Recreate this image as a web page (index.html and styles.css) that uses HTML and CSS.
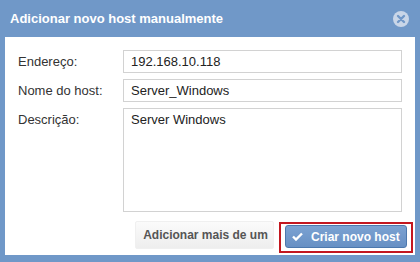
FILE: index.html
```html
<!DOCTYPE html>
<html>
<head>
<meta charset="utf-8">
<link rel="stylesheet" href="styles.css">
</head>
<body>
<div class="dialog">
  <div class="titlebar">
    <span class="title">Adicionar novo host manualmente</span>
    <svg class="close" width="16" height="16" viewBox="0 0 16 16">
      <circle cx="8" cy="8" r="8" fill="#c9d6e8"/>
      <path d="M5 5 L11 11 M11 5 L5 11" stroke="#7198c8" stroke-width="2.4" stroke-linecap="round"/>
    </svg>
  </div>
  <div class="content">
    <div class="form">
      <label class="label">Endereço:</label>
      <div class="field">192.168.10.118</div>
      <label class="label">Nome do host:</label>
      <div class="field">Server_Windows</div>
      <label class="label">Descrição:</label>
      <div class="field area">Server Windows</div>
    </div>
    <div class="actions">
      <button class="btn-secondary">Adicionar mais de um</button>
      <span class="highlight">
        <button class="btn-primary">
          <svg width="11" height="9" viewBox="0 0 11 9"><path d="M1 4.5 L4 7.5 L10 1.5" fill="none" stroke="#fff" stroke-width="2.4"/></svg>
          Criar novo host
        </button>
      </span>
    </div>
  </div>
</div>
</body>
</html>
```
FILE: styles.css
```css
html, body {
  margin: 0;
  padding: 0;
}
body {
  width: 420px;
  height: 262px;
  overflow: hidden;
  font-family: "Liberation Sans", Arial, sans-serif;
}
.dialog {
  width: 420px;
  height: 262px;
  box-sizing: border-box;
  background: #7098c8;
  padding: 0 5px 7px 5px;
  display: flex;
  flex-direction: column;
}
.titlebar {
  height: 37px;
  display: flex;
  align-items: center;
  justify-content: space-between;
  padding: 0 6px 0 5px;
  flex: none;
}
.title {
  color: #fff;
  font-weight: bold;
  font-size: 13px;
  margin-top: 0;
}
.close {
  display: block;
}
.content {
  flex: 1;
  background: #fff;
  padding: 13px 2px 1px 13px;
  display: flex;
  flex-direction: column;
}
.form {
  display: grid;
  grid-template-columns: 105px 279px;
  row-gap: 6px;
  align-items: start;
}
.label {
  font-size: 13px;
  color: #333;
  line-height: 23px;
}
.field {
  height: 23px;
  box-sizing: border-box;
  border: 1px solid #d2d2d2;
  font-size: 13px;
  color: #222;
  padding: 0 7px;
  line-height: 21px;
}
.field.area {
  height: 104px;
  padding-top: 2px;
  line-height: 17px;
}
.actions {
  margin-top: 10px;
  display: flex;
  justify-content: flex-end;
  align-items: flex-start;
  gap: 5px;
}
.btn-secondary {
  margin-top: -1px;
  height: 28px;
  width: 139px;
  border: 1px solid #f0f0f0;
  background: linear-gradient(#fbfbfb, #eeeeee);
  font-family: inherit;
  font-weight: bold;
  font-size: 12px;
  color: #555;
  padding: 0 0 0 2px;
  border-radius: 2px;
}
.highlight {
  display: block;
  border: 2px solid #c3171f;
  padding: 1px 4px 3px 4px;
}
.btn-primary {
  display: flex;
  align-items: center;
  gap: 8px;
  width: 122px;
  height: 23px;
  box-sizing: border-box;
  border: 1px solid #4c78ad;
  border-radius: 3px;
  background: linear-gradient(#7ba2d2, #6790c4);
  color: #fff;
  font-family: inherit;
  font-weight: bold;
  font-size: 12px;
  padding: 0 0 0 6px;
}
.btn-primary svg {
  display: block;
}
```
